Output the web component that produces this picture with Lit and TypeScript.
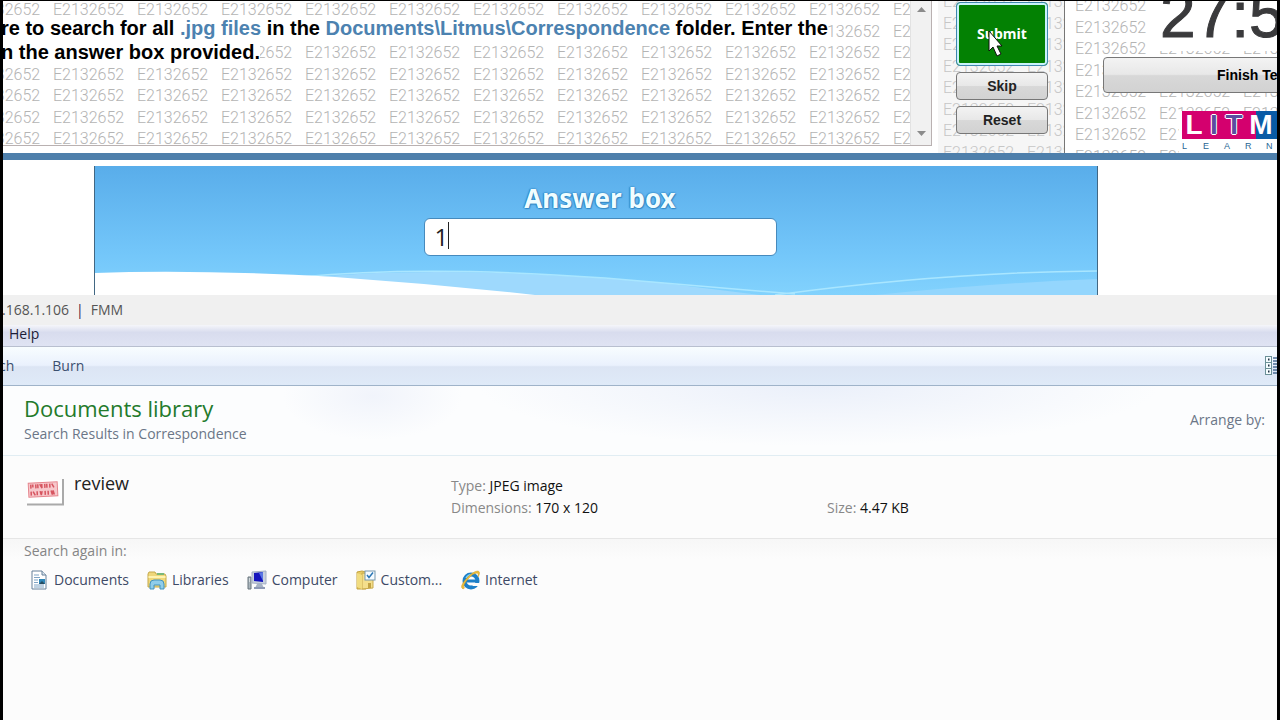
import { LitElement, html, css, svg } from "lit";
import { customElement, property } from "lit/decorators.js";

@customElement("id-watermark")
class IdWatermark extends LitElement {
  @property({ type: Number }) rows = 7;
  @property({ type: Number }) cols = 12;
  static styles = css`
    :host { display: block; overflow: hidden; min-width: 0; min-height: 0; font: 300 16px Roboto, "Liberation Sans", sans-serif; color: #b4b4b4; }
    .grid { display: flex; flex-direction: column; width: max-content; }
    .row { display: flex; line-height: 22px; height: 22px; }
    .row:nth-child(2n) { height: 21px; line-height: 21px; }
    .code { width: 84px; }
  `;
  render() {
    const cells = Array.from({ length: this.cols });
    return html`<div class="grid" aria-hidden="true">
      ${Array.from({ length: this.rows }).map(() => html`<div class="row">${cells.map(() => html`<span class="code">E2132652</span>`)}</div>`)}
    </div>`;
  }
}

const icons = {
  documents: svg`<path d="M3 1h10l4 4v14H3z" fill="#fff" stroke="#66809a"/><path d="M13 1v4h4" fill="#dce6ee" stroke="#66809a"/><path d="M5 5h5M5 7.500h6M5 10h4M5 12.500h4M5 15h10M5 17h10" stroke="#7fa3c4"/><rect x="10" y="9" width="6" height="5" fill="#2f86b8"/><path d="M10 14l3-3 3 3z" fill="#274c60"/>`,
  libraries: svg`<path d="M1 4l1-2h6l1 2h9l1 2v11H1z" fill="#efd77a" stroke="#c5a94a"/><path d="M1.500 7h17" stroke="#fff3b0" stroke-width="2"/><rect x="10" y="3" width="7" height="2" fill="#7ab87a"/><path d="M3 19v-5q0-4 4-4h6q4 0 4 4v5h-4v-4H7v4z" fill="#8fcdea" stroke="#4292bd"/>`,
  computer: svg`<path d="M1 7h3v12H1z" fill="#a9b5bc" stroke="#69757d"/><path d="M2 9h1M2 11h1" stroke="#fff"/><path d="M5 2l14-1v13l-14-1z" fill="#c7d0dd" stroke="#a3afc4"/><path d="M7 3l9-1v10l-9-1z" fill="#1514bd"/><path d="M12 3l4-1v9z" fill="#5a76e3"/><path d="M10 14h5l2 4H8z" fill="#a6b2c4"/><path d="M7 18h11" stroke="#8e9ab5" stroke-width="2"/>`,
  custom: svg`<path d="M1 2l5-1 4 1v17H1z" fill="#e6ca63" stroke="#c4a23f"/><path d="M6 3l11 1v14l-11 1z" fill="#f4df8c" stroke="#c9aa4c"/><path d="M1 3l5 2v14l-5-2z" fill="#f1dc80"/><rect x="9" y="1" width="10" height="9" fill="#f6fbff" stroke="#7798ad"/><path d="M11 5l2 2.500 4-5" fill="none" stroke="#2b77b5" stroke-width="1.500"/><path d="M12 13h3v5h-3z" fill="#c3a343"/>`,
  internet: svg`<circle cx="11" cy="11" r="6.500" fill="none" stroke="#1c7fc8" stroke-width="4"/><path d="M6 11h12" stroke="#1c7fc8" stroke-width="3"/><path d="M12.500 13h7v3h-7z" fill="#fcfcfc"/><path d="M6 8q2-3.500 6-3.500" fill="none" stroke="#7fd0f5" stroke-width="1.500"/><path d="M3 19q-4-2 3-10Q13 1 18 1q3 1 0 6 1-4-1-4-4 0-9 6-6 7-3.500 9z" fill="#edbd3a" stroke="#c99a25" stroke-width=".5"/>`,
};

@customElement("app-root")
class AppRoot extends LitElement {
  static styles = css`
    :host { display: block; min-height: 100vh; box-sizing: border-box; background: #fcfcfc; border: solid #000; border-width: 1px 3px 0; overflow: hidden; font-family: "Open Sans", "Noto Sans", sans-serif; font-size: 14px; }
    * { box-sizing: border-box; }
    button { font: bold 14px/20px "Liberation Sans", Arial, sans-serif; color: #222; padding: 0; border: 1px solid #777; border-radius: 4px; background: linear-gradient(#f3f3f3, #e8e8e8 48%, #d8d8d8 52%, #d2d2d2); }
    a { color: inherit; text-decoration: none; }
    .top { display: grid; grid-template-columns: minmax(0, 1fr) 133px 212px; height: 152px; background: #fff; overflow: hidden; }
    .stack { display: grid; grid-template: minmax(0, 1fr) / minmax(0, 1fr); overflow: hidden; }
    .stack > * { grid-area: 1 / 1; }
    .question { display: grid; grid-template-columns: minmax(0, 1fr) 21px; height: 145px; border: solid #b9b1b1; border-width: 0 1px 1px 0; }
    .q-mark { margin-left: -34px; margin-top: -2px; }
    .q-text { z-index: 1; margin: 0 0 0 -2px; padding-top: 15px; font: bold 20px/24px "Liberation Sans", Arial, sans-serif; color: #000; white-space: nowrap; }
    .q-text > span { background: #fff; }
    .q-text .hl { color: #4c82b0; }
    .scroll { display: flex; flex-direction: column; justify-content: space-between; align-items: center; padding: 4px 0 7px; background: #f1f1f1; border-left: 1px solid #e2e2e2; }
    .scroll svg { width: 9px; height: 9px; fill: #8b8b8b; }
    .actions { margin-left: 6px; background: #f6f6f6; border-right: 1px solid #777; }
    .a-mark { margin: -10px 0 0 5px; color: #c6c6c6; }
    .buttons { z-index: 1; display: flex; flex-direction: column; gap: 6px; padding: 1px 16px 0 18px; }
    .submit-wrap { position: relative; display: grid; height: 64px; }
    .submit { font-family: "Open Sans", sans-serif; background: #038103; color: #fff; border: 1px solid #3f87ae; box-shadow: inset 0 0 0 2px #c9f2fb; }
    .buttons .small { height: 28px; }
    .cursor { position: absolute; left: 32px; top: 28px; width: 15px; height: 28px; }
    .side { padding-left: 3px; }
    .s-mark { margin: -6px 0 0 7px; }
    .side-body { z-index: 1; display: flex; flex-direction: column; width: 336px; }
    .timer { margin-left: 89px; height: 50px; overflow: hidden; background: #fff; font: 64px/64px "Liberation Sans", Arial, sans-serif; -webkit-text-stroke: 1px #3a3a3c; color: #3a3a3c; display: flex; align-items: flex-end; padding-left: 3px; }
    .timer span { height: 68px; }
    .finish { margin: 6px 0 0 35px; height: 36px; color: #000; }
    .logo { margin: 18px 0 0 111px; width: 160px; background: #fff; padding: 0 3px; }
    .tiles { display: flex; height: 28px; background: linear-gradient(90deg, #d4006e 74px, #095ba6 74px); font: bold 28px/28px "Liberation Sans", Arial, sans-serif; color: #fff; }
    .tiles span { width: 24px; text-align: center; }
    .tiles .i { width: 16px; }
    .tiles .m { width: 30px; }
    .tiles .blue { color: #5a4ba0; text-shadow: 1px 0 #fff, -1px 0 #fff, 0 1px #fff, 0 -1px #fff; }
    .learn { display: flex; font: 9px/14px "Liberation Sans", Arial, sans-serif; color: #2a6795; }
    .learn span { width: 21px; }
    .bar { height: 7px; background: #4e7fab; }
    .answer-area { padding: 6px 179px 0 91px; background: #fff; }
    .answer { height: 129px; border: solid #426783; border-width: 0 1px; background: linear-gradient(#59adea, #74c7fa 70%, #82d2fd); }
    .answer > svg { width: 100%; height: 30px; align-self: end; }
    .answer-form { z-index: 1; display: flex; flex-direction: column; align-items: center; padding-top: 12px; padding-left: 8px; }
    .answer-form label { font: bold 26px/40px "Noto Sans", sans-serif; color: #f0fdff; text-shadow: 0 0 2px #1874b5, 1px 1px 1px #3b8fca, -1px 0 1px #3b8fca; }
    .field { position: relative; width: 353px; height: 38px; }
    .field input { width: 100%; height: 100%; border: 1px solid #468abd; border-radius: 6px; padding: 0 0 2px 10px; font: 24px "Open Sans", sans-serif; color: #222; background: #fff; outline: none; }
    .caret { position: absolute; left: 24px; top: 4px; width: 1px; height: 27px; background: #222; }
    .address { height: 30px; display: flex; gap: 7px; background: #f0f0f0; color: #555; line-height: 30px; white-space: pre; }
    .address span:first-child { margin-left: -9px; }
    .sep { color: #402040; }
    .menu { height: 22px; padding-left: 6px; background: linear-gradient(#f5f6fa, #d8dcee 35%, #dfe3f3); border-bottom: 1px solid #b8bfcf; color: #1c1c38; line-height: 18px; }
    .toolbar { height: 39px; display: flex; align-items: center; line-height: 20px; padding-bottom: 1px; background: linear-gradient(#f8fdff, #eaf1fd 48%, #dce5f4 52%, #dfeaf8); border-bottom: 1px solid #9fb3c9; color: #3c506f; overflow: hidden; }
    .toolbar a:first-child { margin-left: -4px; }
    .toolbar a + a { margin-left: 38px; }
    .toolbar svg { margin-left: auto; width: 12px; height: 22px; }
    .head { display: flex; justify-content: space-between; height: 70px; padding: 6px 12px 0 21px; border-bottom: 1px solid #e1edf3; background: radial-gradient(ellipse 340px 60px at 64% 0, #ebf0fa, transparent), radial-gradient(ellipse 90px 44px at 29% 10px, #f1f4fb, transparent), #fcfdfe; }
    h1 { margin: 0; font-weight: 400; font-size: 22px; line-height: 32px; color: #237a2b; }
    .sub { margin: 0; line-height: 20px; color: #6b7687; }
    .arrange { padding-top: 18px; line-height: 20px; color: #6b7687; }
    .item { display: grid; grid-template-columns: 424px 376px 1fr; height: 82px; padding: 18px 0 0 24px; line-height: 22px; color: #888; }
    .name { display: flex; gap: 10px; color: #222; font-size: 18px; line-height: 18px; }
    .name svg { width: 37px; height: 32px; }
    .meta { padding-top: 1px; }
    .meta b { font-weight: 400; color: #111; }
    .size { padding-top: 23px; }
    .again { padding: 2px 0 0 21px; border-top: 1px solid #e6e6e6; background: linear-gradient(#f7f7f7, #fcfcfc 20px); color: #858585; line-height: 20px; }
    .again p { margin: 0; }
    .places { display: flex; gap: 18px; padding: 7px 0 0 5px; color: #3e4a66; }
    .places a { display: flex; gap: 5px; align-items: center; line-height: 24px; }
    .places svg { width: 20px; height: 20px; }
  `;
  render() {
    const places: [keyof typeof icons, string][] = [["documents", "Documents"], ["libraries", "Libraries"], ["computer", "Computer"], ["custom", "Custom..."], ["internet", "Internet"]];
    return html`
      <header class="top">
        <section class="question">
          <div class="stack">
            <id-watermark class="q-mark" rows="7" cols="13"></id-watermark>
            <p class="q-text"><span>re to search for all <span class="hl">.jpg files</span> in the <span class="hl">Documents\\Litmus\\Correspondence</span> folder. Enter the</span><br><span>n the answer box provided.</span></p>
          </div>
          <div class="scroll"><svg viewBox="0 0 9 9"><path d="M0 7l4.500-5L9 7z"/></svg><svg viewBox="0 0 9 9"><path d="M0 2l4.500 5L9 2z"/></svg></div>
        </section>
        <section class="actions stack">
          <id-watermark class="a-mark" rows="8" cols="2"></id-watermark>
          <div class="buttons">
            <div class="submit-wrap"><button class="submit">Submit</button>
              <svg class="cursor" viewBox="0 0 15 28"><path d="M1 1v20l4-4 4 9 4-2-4-8h5z" fill="#fff" stroke="#111"/></svg></div>
            <button class="small">Skip</button>
            <button class="small">Reset</button>
          </div>
        </section>
        <section class="side stack">
          <id-watermark class="s-mark" rows="8" cols="3"></id-watermark>
          <div class="side-body">
            <div class="timer"><span>27:5</span></div>
            <button class="finish">Finish Test</button>
            <div class="logo">
              <div class="tiles"><span>L</span><span class="i blue">I</span><span class="blue">T</span><span class="m">M</span></div>
              <div class="learn"><span>L</span><span>E</span><span>A</span><span>R</span><span>N</span></div>
            </div>
          </div>
        </section>
      </header>
      <div class="bar"></div>
      <section class="answer-area">
        <div class="answer stack">
          <svg viewBox="0 0 1002 30" preserveAspectRatio="none">
            <path d="M210 13Q340-1 560 17L665 30H330z" fill="#9ed9fd"/>
            <path d="M780 30Q900 18 1002 14V30z" fill="#94d6fd"/>
            <path d="M205 12Q330 0 510 13L700 29M680 30Q850 7 1002 6" fill="none" stroke="#a9e6ff" stroke-width="1.500"/>
            <path d="M0 8Q100 4 240 12Q340 19 440 30H0z" fill="#fff"/>
          </svg>
          <form class="answer-form">
            <label for="answer">Answer box</label>
            <div class="field"><input id="answer" type="text" value="1"><span class="caret"></span></div>
          </form>
        </div>
      </section>
      <main>
        <div class="address"><span>2.168.1.106</span><span class="sep">|</span><span>FMM</span></div>
        <nav class="menu"><a href="#help">Help</a></nav>
        <nav class="toolbar"><a href="#search">ch</a><a href="#burn">Burn</a>
          <svg viewBox="0 0 12 22"><g fill="#f5fdff" stroke="#6b9097"><rect x=".5" y="1.500" width="6" height="6"/><rect x=".5" y="7.500" width="6" height="6"/><rect x=".5" y="13.500" width="6" height="6"/></g><path d="M3 4.500h1.500M3 10.500h1.500M3 16.500h1.500" stroke="#234" stroke-width="2"/><path d="M8 3h4M8 6h4M8 9h4M8 12h4M8 15h4M8 18h4" stroke="#4a6c92" stroke-width="1.500"/></svg>
        </nav>
        <section class="head"><div><h1>Documents library</h1><p class="sub">Search Results in Correspondence</p></div><span class="arrange">Arrange by:</span></section>
        <section class="item">
          <div class="name">
            <svg viewBox="0 0 37 32"><path d="M0 6h35v24H0z" fill="#fff"/><path d="M0 30.500h36V5" fill="none" stroke="#aaa" stroke-width="2"/><g transform="rotate(-3 16 15)"><rect x="1.500" y="8.500" width="29" height="14" fill="#f7c7cb" stroke="#e5868e"/><path d="M4 10v4M6 10v3M9 10v4M11 10v4M13 10l2 4v-4M18 10v4M20 10v4M23 10v4M25 10l2 4M4 17v4M6 17l2 4M10 17v4M13 17l1 4 1-4M18 17v4M21 17v4M24 17l1 4 1-4 1 4" fill="none" stroke="#d65560" stroke-width="1.500"/></g></svg>
            <span>review</span>
          </div>
          <div class="meta">Type: <b>JPEG image</b><br>Dimensions: <b>170 x 120</b></div>
          <div class="meta size">Size: <b>4.47 KB</b></div>
        </section>
        <section class="again">
          <p>Search again in:</p>
          <nav class="places">${places.map(([k, t]) => html`<a href="#${k}"><svg viewBox="0 0 20 20">${icons[k]}</svg>${t}</a>`)}</nav>
        </section>
      </main>`;
  }
}
